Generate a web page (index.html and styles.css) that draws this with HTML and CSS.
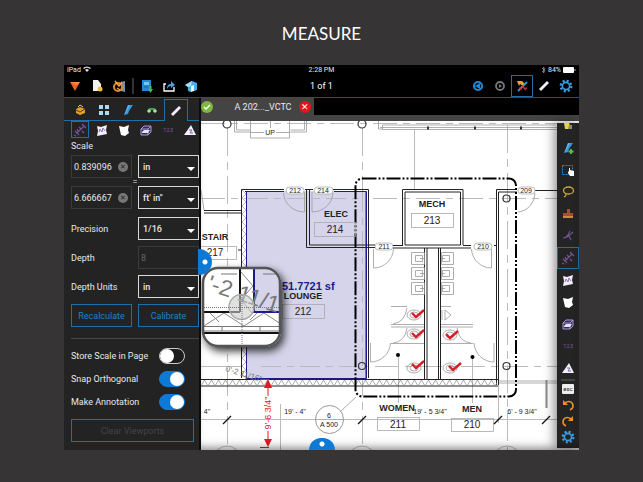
FILE: index.html
```html
<!DOCTYPE html>
<html lang="en">
<head>
    <meta charset="UTF-8">
    <meta name="viewport" content="width=device-width, initial-scale=1.0">
    <title>Measure</title>
    <link rel="stylesheet" href="styles.css">
</head>
<body>
    <!-- shared icons -->
    <svg class="sprite" aria-hidden="true">
        <symbol id="i-length" viewBox="0 0 14 14"><path d="M2 8l4 4M9 1l4 4M4 10l7-7M1 12l2 1M4 6l1 2M6 4l2 2M9 8l2 2" fill="none" stroke="#79549f" stroke-width="1.2"/></symbol>
        <symbol id="i-area" viewBox="0 0 14 14"><path d="M2 3l4 1 6-2-1 5 1 4-5 1-5 1 1-5z" fill="#f3effa"/><path d="M4 9l1-3 2 3 1-4 2 3" fill="none" stroke="#8c6fc0"/></symbol>
        <symbol id="i-perimeter" viewBox="0 0 14 14"><path d="M2 3l5 1 5-2-1 5 1 3-4 3-4-1z" fill="#fff"/></symbol>
        <symbol id="i-volume" viewBox="0 0 14 14"><path d="M2 6l3-3h7v6l-3 3H2z" fill="#352a58" stroke="#a99bd6"/><path d="M2 6h7v6M9 6l3-3" fill="none" stroke="#a99bd6"/><path d="M3 9l2-2h6L9 10H3z" fill="#e6e2f6"/></symbol>
        <symbol id="i-count" viewBox="0 0 14 14"><text x="7" y="9" class="count-text">123</text></symbol>
        <symbol id="i-angle" viewBox="0 0 14 14"><path d="M8 2l5 10H1z" fill="#f5f2fb"/><path d="M6 7h3l-2 3h3" fill="none" stroke="#7d5fb0"/></symbol>
        <symbol id="i-gear" viewBox="0 0 14 14"><circle cx="7" cy="7" r="5.3" fill="none" stroke="#3aa0e8" stroke-width="2.2" stroke-dasharray="2.1 2.06"/><circle cx="7" cy="7" r="3.6" fill="none" stroke="#3aa0e8" stroke-width="1.6"/></symbol>
        <symbol id="i-ruler" viewBox="0 0 14 14"><path d="M3 11l8-8" stroke="#f4ecfa" stroke-width="2.8"/></symbol>
        <symbol id="i-pen" viewBox="0 0 14 14"><path d="M7 2l5 0-4 6-1 3-4 1 2-3z" fill="#2f97e0"/><path d="M7 2l2 0-4 8-2 2z" fill="#5fb2f0"/></symbol>
        <symbol id="check" viewBox="0 0 14 10"><path d="M1 4l4 4 8-7" fill="none" stroke="#d81e28" stroke-width="2.4"/></symbol>
    </svg>

    <h1 class="page-title">MEASURE</h1>

    <div class="app">
        <div class="status-bar">
            <div class="status-left">iPad
                <svg width="8" height="6" viewBox="0 0 8 6"><path d="M0 2a6 6 0 0 1 8 0L7 3a4.500 4.500 0 0 0-6 0zM2 4a3 3 0 0 1 4 0L4 6z" fill="#ddd"/></svg>
            </div>
            <div class="status-time">2:28 PM</div>
            <div class="status-right">
                <svg width="5" height="8" viewBox="0 0 5 8"><path d="M1 2l3 3-1.500 2V1L4 3 1 6" fill="none" stroke="#999" stroke-width=".7"/></svg>
                84%
                <svg width="13" height="6" viewBox="0 0 13 6"><rect width="11" height="6" rx="1" fill="#fff"/><path d="M12 2v2" stroke="#aaa"/></svg>
            </div>
        </div>

        <div class="toolbar">
            <div class="tools">
                <button class="tool" aria-label="Menu"><svg viewBox="0 0 14 14"><path d="M2 3h10L7 12z" fill="#e8622c"/><path d="M2 3h10L9 6z" fill="#f7894f"/></svg></button>
                <button class="tool" aria-label="New"><svg viewBox="0 0 14 14"><path d="M3 1h5l3 4v7H3z" fill="#f2f2f2"/><circle cx="10" cy="10" r="2.500" fill="#f0c13d"/></svg></button>
                <button class="tool" aria-label="Profile"><svg viewBox="0 0 14 14"><path d="M9 3l4-1v11l-4-1z" fill="#6f93b5"/><circle cx="6" cy="8" r="4" fill="none" stroke="#e08a2a" stroke-width="2"/><path d="M3 2l4 5 3-4M5 9l3 2" fill="none" stroke="#f0a64b" stroke-width="1.500"/></svg></button>
                <span class="separator"></span>
                <button class="tool" aria-label="Save"><svg viewBox="0 0 14 14"><path d="M2 1h9v11H2z" fill="#2389d6"/><path d="M4 3h5v3H4z" fill="#7cc0f2"/><path d="M4 8h4" stroke="#1665a8"/><path d="M8 10h5l-2.500 4z" fill="#54b948"/><path d="M10.500 7v4" stroke="#54b948" stroke-width="2"/></svg></button>
                <button class="tool" aria-label="Share"><svg viewBox="0 0 14 14"><path d="M4 5H2v7h10V8" fill="none" stroke="#fff" stroke-width="1.300"/><path d="M5 10c0-4 2-5 4-5V2l4 4-4 3V7c-2 0-3 1-4 3z" fill="#3ba4ec"/></svg></button>
                <button class="tool" aria-label="Studio"><svg viewBox="0 0 14 14"><path d="M1 6l7-4 5 2v7l-3 1V8L7 7v6L4 12V8z" fill="#49aee8"/><path d="M1 6l7-4-1 5-3 1z" fill="#a5ddfa"/><path d="M7 7v6l3-1V6z" fill="#e6f6ff"/></svg></button>
            </div>
            <div class="page-count">1 of 1</div>
            <div class="tools tools-right">
                <button class="tool" aria-label="Previous"><svg viewBox="0 0 14 14"><circle cx="7" cy="7" r="4" fill="none" stroke="#1e88d8" stroke-width="2.200"/><path d="M9 4v6L4 7z" fill="#1e88d8"/></svg></button>
                <button class="tool" aria-label="Next"><svg viewBox="0 0 14 14"><circle cx="7" cy="7" r="4" fill="none" stroke="#777" stroke-width="1.800"/><path d="M6 5v4l3-2z" fill="#777"/></svg></button>
                <button class="tool selected" aria-label="Toolsets"><svg viewBox="0 0 14 14"><path d="M2 2h5l3 3-2 2-3-2-1 2z" fill="#f2a23a"/><path d="M3 12l9-9" stroke="#3994dc" stroke-width="2"/><path d="M7 7l4 4M5 8l1 3M9 10l3-1" stroke="#c42f2f" stroke-width="1.600"/></svg></button>
                <button class="tool" aria-label="Measure"><svg><use href="#i-ruler"/></svg></button>
                <button class="tool" aria-label="Settings"><svg><use href="#i-gear"/></svg></button>
            </div>
        </div>

        <div class="workspace">
            <div class="sidebar">
                <div class="panel-tabs">
                    <button class="tab" aria-label="Tool Chest"><svg viewBox="0 0 14 14"><path d="M3 6l4-2 5 2v4l-5 2-4-2z" fill="#e0a02f"/><path d="M3 7l4 2 5-3" fill="none" stroke="#5b3b0d"/><path d="M5 4l2-2 3 2" fill="none" stroke="#f3c86a"/></svg></button>
                    <button class="tab" aria-label="Thumbnails"><svg viewBox="0 0 14 14"><path d="M2 2h4v4H2zM8 2h4v4H8zM2 8h4v4H2zM8 8h4v4H8z" fill="#a9dcfb"/></svg></button>
                    <button class="tab" aria-label="Markups"><svg><use href="#i-pen"/></svg></button>
                    <button class="tab" aria-label="Search"><svg viewBox="0 0 14 14"><path d="M3 6h3v3H3zM8 6h3v3H8z" fill="#d4f0d0"/><path d="M4 5h6v2H4z" fill="#4f9a56"/><circle cx="4" cy="8" r="1.500" fill="none" stroke="#6db06f"/><circle cx="10" cy="8" r="1.500" fill="none" stroke="#6db06f"/></svg></button>
                    <button class="tab active" aria-label="Measurements"><svg><use href="#i-ruler"/></svg></button>
                </div>
                <div class="measure-tools">
                    <button class="measure selected" aria-label="Length"><svg><use href="#i-length"/></svg></button>
                    <button class="measure" aria-label="Area"><svg><use href="#i-area"/></svg></button>
                    <button class="measure" aria-label="Perimeter"><svg><use href="#i-perimeter"/></svg></button>
                    <button class="measure" aria-label="Volume"><svg><use href="#i-volume"/></svg></button>
                    <button class="measure" aria-label="Count"><svg><use href="#i-count"/></svg></button>
                    <button class="measure" aria-label="Angle"><svg><use href="#i-angle"/></svg></button>
                </div>

                <label class="scale-label" for="scaleFrom">Scale</label>
                <div class="form-grid scale-grid">
                    <div class="text-field">
                        <input type="text" id="scaleFrom" value="0.839096">
                        <button class="clear" aria-label="Clear">✕</button>
                    </div>
                    <div class="select-field">
                        <select aria-label="Page units"><option>in</option></select>
                    </div>
                    <span class="equals">=</span>
                    <div class="text-field">
                        <input type="text" aria-label="Scale to" value="6.666667">
                        <button class="clear" aria-label="Clear">✕</button>
                    </div>
                    <div class="select-field">
                        <select aria-label="Scale units"><option>ft' in"</option></select>
                    </div>
                </div>

                <div class="form-grid">
                    <label for="precision">Precision</label>
                    <div class="select-field">
                        <select id="precision"><option>1/16</option></select>
                    </div>
                    <label for="depth">Depth</label>
                    <div class="text-field">
                        <input type="text" id="depth" value="8" disabled>
                    </div>
                    <label for="depthUnits">Depth Units</label>
                    <div class="select-field">
                        <select id="depthUnits"><option>in</option></select>
                    </div>
                    <button class="btn">Recalculate</button>
                    <button class="btn">Calibrate</button>
                </div>

                <div class="options">
                    <label class="option">Store Scale in Page <input type="checkbox" class="switch"></label>
                    <label class="option">Snap Orthogonal <input type="checkbox" class="switch" checked></label>
                    <label class="option">Make Annotation <input type="checkbox" class="switch" checked></label>
                    <button class="btn" disabled>Clear Viewports</button>
                </div>
            </div>

            <div class="document">
                <div class="doc-tabs">
                    <div class="doc-tab">
                        <svg width="12" height="12" viewBox="0 0 12 12"><circle cx="6" cy="6" r="6" fill="#7cb83c"/><path d="M3 6l2 2 4-4" fill="none" stroke="#fff" stroke-width="1.500"/></svg>
                        <span>A 202..._VCTC</span>
                        <button class="close-tab" aria-label="Close">✕</button>
                    </div>
                </div>

                <div class="canvas">
                    <svg class="plan" viewBox="201 121 378 329" preserveAspectRatio="xMinYMin slice">
                        <defs>
                            <pattern id="hatch" width="7" height="7" patternUnits="userSpaceOnUse" x="201" y="379"><path d="M0 7l3.500-6 3.500 6" fill="none" stroke="#888" stroke-width=".7"/></pattern>
                            <pattern id="wallHatch" width="4" height="8" patternUnits="userSpaceOnUse" x="242" y="190"><path d="M0 0l4 4-4 4" fill="none" stroke="#888" stroke-width=".6"/></pattern>
                            <clipPath id="lensClip"><rect x="202" y="267" width="79" height="80" rx="16"/></clipPath>
                            <filter id="lensShadow" x="-30%" y="-30%" width="160%" height="160%"><feDropShadow dx="3" dy="4" stdDeviation="4" flood-opacity=".8"/></filter>
                        </defs>

                        <!-- grid lines -->
                        <g class="grid">
                            <path d="M201 123.500H557M201 198.500H557M246 366.500H557" stroke-dasharray="24 6 7 6"/>
                            <path d="M227.500 128V450M362.500 128V450M507.500 125V450" stroke-dasharray="28 6 8 6"/>
                            <path d="M414.500 129V189M201 366.500h40M280.500 404v46M398.500 357v46M472.500 357v46M498.500 385v38M201 419.500H557"/>
                            <circle cx="227" cy="460" r="14"/><circle cx="362" cy="460" r="14"/><circle cx="507" cy="460" r="14"/>
                        </g>

                        <!-- stairs and top wall -->
                        <path class="thin" d="M234.500 121v11h16M306.500 121v11h-16M236.500 121v9h14M304.500 121v9h-14M250.500 121v17h39v-17M250 132.500h14M276 132.500h14M270.500 121v7M378.500 121v8h4v-4h174M380 127.500h177M382 129.500h175"/>
                        <path d="M427 128h2M474 128h2M520 128h2" stroke="#333" stroke-width="3"/>
                        <text class="small" x="270" y="135">UP</text>

                        <rect x="246" y="191" width="121" height="187" fill="#d5d4ea"/>
                        <path d="M248 198.500h118M362.500 192v174" class="grid" stroke-dasharray="20 6 7 6"/>
                        <path d="M261 366.500h96" class="grid" stroke-dasharray="20 6 7 6"/>

                        <!-- walls -->
                        <path class="wall" d="M204 210.500h37M204 213h37M241.500 378V189.500H284M245 191.500h39M305 189.500h8M333 189.500h35.500V378M306.500 190v57.500H375M309.500 190v55H375M366 192v186M238 250h4"/>
                        <rect x="242" y="190" width="4" height="189" fill="url(#wallHatch)"/>
                        <path d="M283 191.500H246.500V378.500H366.500V191.500H334" class="navy"/>
                        <path class="wall" d="M402.500 245V189.500h60.500V245M405 245v-53h55.500v53zM393 245.500h10M463 245.500h8M393 248h78M494 245.500h3M496.500 385V189.500H517M498.500 385V192H517M535 190.500h22M424.500 248V379M427 248V379M438.500 248V379M440.500 248V379"/>
                        <path class="wall" d="M201 379.500H498M201 386H498"/>
                        <path class="thin" d="M499 381h58M499 383h58"/>
                        <rect x="201" y="380" width="296" height="6" fill="url(#hatch)"/>
                        <path d="M546.500 380v28" stroke="#888" stroke-width="2"/>

                        <!-- doors -->
                        <g class="thin">
                            <path d="M283.500 193a21 20 0 0 0 21 19v-20M333 193a21 20 0 0 1-21 19v-20M373.500 249v19a20 20 0 0 0 20-19M491.500 249v19a20 20 0 0 1-20-19M535 193a19 19 0 0 1-17 19M370.500 343v19a20 20 0 0 0 20-19M494 343v19a20 20 0 0 1-20-19M201 190l3 20"/>
                            <path d="M391 306.500h16M391 324.500h33M391 343.500h33M441 306.500h10M441 324.500h32M441 343.500h32M391 327h33M441 327h32M407 308q-2 14-14 16M407 328q-2 14-14 15M457 328q2 14 14 15"/>
                        </g>

                        <!-- fixtures -->
                        <g class="thin">
                            <path d="M411.500 252.500h13v12h-13zM411.500 267.500h13v12h-13zM411.500 282.500h13v12h-13zM441.500 252.500h12v12h-12zM441.500 267.500h12v12h-12zM441.500 282.500h12v12h-12z"/>
                            <path d="M415.500 255.500h7v6h-7zM415.500 270.500h7v6h-7zM415.500 285.500h7v6h-7zM442.500 255.500h7v6h-7zM442.500 270.500h7v6h-7zM442.500 285.500h7v6h-7zM420 258.500h4M420 273.500h4M420 288.500h4M441 258.500h4M441 273.500h4M441 288.500h4M442 310v10M445 310l6 5-6 5z"/>
                            <ellipse cx="414" cy="315" rx="7" ry="5"/><ellipse cx="414" cy="334" rx="7" ry="5"/><ellipse cx="414" cy="368" rx="7" ry="5"/>
                            <ellipse cx="450" cy="335" rx="7" ry="5"/><ellipse cx="450" cy="368" rx="7" ry="5"/>
                            <ellipse cx="414" cy="315" rx="4" ry="3"/><ellipse cx="414" cy="334" rx="4" ry="3"/><ellipse cx="414" cy="368" rx="4" ry="3"/>
                            <ellipse cx="450" cy="335" rx="4" ry="3"/><ellipse cx="450" cy="368" rx="4" ry="3"/>
                        </g>
                        <circle cx="398" cy="355" r="2"/><circle cx="472.500" cy="357" r="2"/>
                        <use href="#check" x="411" y="309" width="14" height="10"/>
                        <use href="#check" x="411" y="329" width="14" height="10"/>
                        <use href="#check" x="411" y="360" width="14" height="10"/>
                        <use href="#check" x="445" y="330" width="14" height="10"/>
                        <use href="#check" x="448" y="362" width="14" height="10"/>

                        <g class="column">
                            <circle cx="227" cy="124" r="4"/><circle cx="362" cy="124" r="4"/><circle cx="506.500" cy="198.500" r="3.500"/><circle cx="362" cy="366" r="3.500"/><circle cx="506.500" cy="366" r="3.500"/>
                        </g>

                        <rect class="boundary" x="355.500" y="178.500" width="160.500" height="218" rx="7"/>

                        <!-- door numbers -->
                        <g class="pill">
                            <rect x="286" y="187" width="18" height="7" rx="3.500"/><rect x="314" y="187" width="19" height="7" rx="3.500"/><rect x="375" y="243" width="18" height="7" rx="3.500"/><rect x="474" y="243" width="18" height="7" rx="3.500"/><rect x="518" y="187" width="17" height="7" rx="3.500"/>
                        </g>
                        <g class="small">
                            <text x="295" y="193">212</text><text x="323" y="193">214</text><text x="384" y="249">211</text><text x="483" y="249">210</text><text x="526" y="193">209</text>
                        </g>

                        <!-- rooms -->
                        <g class="room-box">
                            <path d="M201 246.500h35.500v13H201"/><rect x="314.500" y="222.500" width="41" height="14"/><rect x="282.500" y="304.500" width="42" height="14"/><rect x="411.500" y="213.500" width="42" height="14"/><rect x="377.500" y="417.500" width="42" height="13"/><rect x="451.500" y="418.500" width="42" height="13"/>
                        </g>
                        <g class="room">
                            <text x="336" y="217">ELEC</text><text x="215" y="240">STAIR</text><text x="303" y="299">LOUNGE</text><text x="432" y="207">MECH</text><text x="397" y="411">WOMEN</text><text x="472" y="412">MEN</text>
                        </g>
                        <g class="label">
                            <text x="335" y="233">214</text><text x="215" y="256">217</text><text x="303" y="315">212</text><text x="432" y="224">213</text><text x="398" y="428">211</text><text x="472" y="428">210</text>
                        </g>
                        <text class="area-value" x="282" y="290">51.7721 sf</text>

                        <!-- dimensions -->
                        <path d="M223 424l8-8M358 424l8-8M494 424l8-8M542 424l8-8" stroke="#111" stroke-width="1.300"/>
                        <path class="thin" d="M341 411l15-14"/>
                        <circle cx="329.500" cy="419.500" r="14" fill="#fff" stroke="#999"/>
                        <path class="thin" d="M315 419.500h29"/>
                        <g class="small">
                            <text x="207" y="414">4"</text><text x="295" y="414">19' - 4"</text><text x="430" y="414">19' - 5 3/4"</text><text x="522" y="414">6' - 9 3/4"</text><text x="329" y="418">6</text><text x="329" y="427">A 500</text>
                        </g>
                        <text class="gray-dim" transform="translate(225 371) rotate(17)">0'-2 11/16"</text>
                        <path d="M260 379.500h9M260 447.500h9M268 382v14M268 431v14" stroke="#e01b22"/>
                        <path d="M268 379l4 9h-8zM268 447l4-8h-8z" fill="#e01b22"/>
                        <text class="red-dim" transform="translate(271 413) rotate(-90)">9'-6 3/4"</text>

                        <!-- magnifier -->
                        <rect x="202" y="267" width="79" height="80" rx="16" fill="#fff" filter="url(#lensShadow)"/>
                        <g clip-path="url(#lensClip)">
                            <path d="M254 267h30v45h-30z" fill="#d5d4ea"/>
                            <path d="M241 272l12 14-12 14 12 14M204 326l20-13 20 13 20-13 20 13M210 313l9 9M250 320l8-8" fill="none" stroke="#888"/>
                            <path d="M221 274h16M263 274h14M202 326.500h80M202 331h80M222 327v4M260 327v4" stroke="#777"/>
                            <path d="M240 267v45M202 312h38M202 333h80" stroke="#111" stroke-width="2"/>
                            <path d="M254 267v45h28" fill="none" stroke="#1b1b8c" stroke-width="2"/>
                            <text class="lens-text" transform="translate(206 290) rotate(18)">'-2 11/1</text>
                            <circle cx="241.500" cy="307" r="12.500" fill="#ccc" fill-opacity=".6" stroke="#aaa" stroke-width="1.500"/>
                            <path d="M204 307.500h76M242 295v50" stroke="#777" stroke-dasharray="1 1"/>
                        </g>
                        <rect x="203" y="268" width="77" height="78" rx="15" fill="none" stroke="#555" stroke-width="2.500"/>
                    </svg>
                    <button class="panel-handle" aria-label="Toggle panel"></button>

                    <div class="rail">
                        <button class="tool" aria-label="Highlight"><svg viewBox="0 0 14 14"><path d="M3 4h5l2 4-3 2H4z" fill="#e6d23c"/><path d="M8 6h3v4H7z" fill="#8b8b7a"/></svg></button>
                        <button class="tool" aria-label="Add markup"><svg viewBox="0 0 14 14"><use href="#i-pen" width="14" height="14"/><path d="M10 8v5M7.500 10.500h5" stroke="#5bc04b" stroke-width="1.800"/></svg></button>
                        <button class="tool" aria-label="Select"><svg viewBox="0 0 14 14"><path d="M1.500 2.500h10v9h-10z" fill="none" stroke="#2389d6" stroke-dasharray="2 1"/><path d="M8 5v4l-1-1v2l2 3h4V8L9 7V5z" fill="#fff"/></svg></button>
                        <button class="tool" aria-label="Lasso"><svg viewBox="0 0 14 14"><ellipse cx="7.500" cy="5.500" rx="5" ry="3.500" fill="none" stroke="#d0a640" stroke-width="1.300"/><path d="M4 8c2 1 1 3-1 4" fill="none" stroke="#d0a640" stroke-width="1.300"/></svg></button>
                        <button class="tool" aria-label="Stamp"><svg viewBox="0 0 14 14"><path d="M6 2h3v4h3v3H2V6h4z" fill="#a04f34"/><path d="M2 9h10v2H2z" fill="#c98a4a"/></svg></button>
                        <button class="tool" aria-label="Calibrate"><svg viewBox="0 0 14 14"><path d="M2 9c3 0 6-2 10-6M7 5l3 6M9 2L7 6l-2 2" fill="none" stroke="#6d5390" stroke-width="1.200"/></svg></button>
                        <button class="tool selected" aria-label="Length"><svg><use href="#i-length"/></svg></button>
                        <button class="tool" aria-label="Area"><svg><use href="#i-area"/></svg></button>
                        <button class="tool" aria-label="Perimeter"><svg><use href="#i-perimeter"/></svg></button>
                        <button class="tool" aria-label="Volume"><svg><use href="#i-volume"/></svg></button>
                        <button class="tool" aria-label="Count"><svg><use href="#i-count"/></svg></button>
                        <button class="tool" aria-label="Angle"><svg><use href="#i-angle"/></svg></button>
                        <span class="rail-divider"></span>
                        <button class="tool short"><span class="esc">esc</span></button>
                        <button class="tool short" aria-label="Undo"><svg viewBox="0 0 14 14"><path d="M4 5c4-3 8-1 8 3 0 2-1 3-3 4" fill="none" stroke="#e8922c" stroke-width="1.600"/><path d="M2 2v5h5z" fill="#e8922c"/></svg></button>
                        <button class="tool short" aria-label="Redo"><svg viewBox="0 0 14 14"><path d="M10 5C6 2 2 4 2 8c0 2 1 3 3 4" fill="none" stroke="#e8922c" stroke-width="1.600"/><path d="M12 2v5H7z" fill="#e8922c"/></svg></button>
                        <button class="tool short" aria-label="Settings"><svg><use href="#i-gear"/></svg></button>
                    </div>
                </div>
            </div>
        </div>
        <button class="bottom-handle" aria-label="Toggle bottom panel"></button>
    </div>
</body>
</html>
```
FILE: styles.css
```css
* {
    margin: 0;
    padding: 0;
    box-sizing: border-box;
}

body {
    background: #363435;
    color: #e8e8e8;
    font-family: Roboto, "Liberation Sans", sans-serif;
    font-size: 9px;
    padding: 0 64px 32px;
}

button,
input,
select {
    font: inherit;
    color: inherit;
    background: none;
    border: none;
    border-radius: 0;
}

button {
    cursor: pointer;
}

.sprite {
    display: none;
}

.page-title {
    font-family: Lato, sans-serif;
    font-size: 17px;
    font-weight: normal;
    line-height: 23px;
    text-align: center;
    color: #fff;
    padding: 22px 0 20px;
}

.app {
    position: relative;
    background: #000;
    overflow: hidden;
}

/* top bars */
.status-bar,
.toolbar {
    display: grid;
    grid-template-columns: 1fr auto 1fr;
    align-items: center;
}

.status-bar {
    height: 10px;
    padding: 0 3px;
    font-size: 7px;
    line-height: 10px;
}

.status-right {
    display: flex;
    justify-content: flex-end;
    align-items: center;
    gap: 2px;
}

.toolbar {
    height: 23px;
    border-bottom: 1px solid #14568a;
}

.page-count {
    color: #fff;
}

.tools {
    display: flex;
    align-items: center;
}

.tools-right {
    justify-content: flex-end;
    padding-right: 2px;
}

.separator {
    width: 2px;
    height: 16px;
    margin: 0 2px;
    background: #333;
}

.tool {
    display: flex;
    justify-content: center;
    align-items: center;
    flex: none;
    width: 22px;
    height: 22px;
}

.tool svg,
.tab svg,
.measure svg {
    display: block;
    width: 14px;
    height: 14px;
}

.selected {
    border: 1px solid #1f6fa9;
}

.count-text {
    font-size: 6px;
    text-anchor: middle;
    fill: #79549f;
}

.workspace {
    display: flex;
}

/* left panel */
.sidebar {
    flex: none;
    width: 137px;
    padding: 0 2px 8px 7px;
    background: #232323;
    border-right: 2px solid #0c0c0c;
}

.panel-tabs {
    display: flex;
    height: 23px;
    padding: 1px 0 0 4px;
    margin: 0 -2px 0 -7px;
    border-bottom: 1px solid #1f6fa9;
}

.tab {
    display: flex;
    justify-content: center;
    align-items: center;
    width: 24px;
    height: 22px;
}

.tab.active {
    background: #232323;
    border: 1px solid #1f6fa9;
    border-bottom: none;
}

.measure-tools {
    display: flex;
    height: 16px;
    margin: 0 -4px 0 -2px;
}

.measure {
    display: flex;
    justify-content: center;
    align-items: center;
    width: 22px;
    height: 17px;
}

.measure.selected {
    width: 18px;
    margin: 0 2px;
}

.scale-label {
    display: block;
    line-height: 18px;
}

.form-grid {
    display: grid;
    grid-template-columns: 1fr 1fr;
    grid-auto-rows: 23px;
    gap: 6px;
    align-items: center;
    margin-right: -2px;
}

.scale-grid {
    position: relative;
    row-gap: 8px;
    margin-bottom: 8px;
}

.equals {
    position: absolute;
    left: 0;
    right: 0;
    top: 22px;
    line-height: 10px;
    text-align: center;
}

.text-field,
.select-field {
    display: flex;
    align-items: center;
    position: relative;
    height: 23px;
    border: 1px solid #3a3a3a;
}

.select-field {
    border-color: #d8d8d8;
}

.text-field input,
.select-field select {
    width: 100%;
    min-width: 0;
    height: 100%;
    padding-left: 2px;
}

.text-field input:disabled {
    color: #666;
}

.select-field select {
    appearance: none;
    padding-left: 4px;
    font-weight: 500;
}

.select-field::after {
    content: "";
    position: absolute;
    right: 3px;
    top: 11px;
    border: 4px solid transparent;
    border-top-color: #fff;
    border-bottom: none;
    pointer-events: none;
}

.clear {
    flex: none;
    width: 10px;
    height: 10px;
    margin-right: 3px;
    border-radius: 50%;
    background: #777;
    color: #232323;
    font-size: 7px;
    line-height: 10px;
}

.btn {
    height: 23px;
    border: 1px solid #1f6fa9;
    color: #2480c4;
}

.btn:disabled {
    color: #444;
}

.options {
    display: flex;
    flex-direction: column;
    border-top: 1px solid #484848;
    margin: 11px -2px 0 0;
    padding-top: 5px;
}

.option {
    display: flex;
    justify-content: space-between;
    align-items: center;
    height: 23px;
    padding-right: 14px;
}

.options .btn {
    margin: 6px 5px 0 0;
}

.switch {
    appearance: none;
    display: flex;
    width: 26px;
    height: 16px;
    border: 1px solid #ccc;
    border-radius: 8px;
    background: #1c1c1c;
}

.switch::before {
    content: "";
    width: 14px;
    height: 14px;
    border-radius: 50%;
    background: #fff;
}

.switch:checked {
    justify-content: flex-end;
    background: #0f7ad6;
    border-color: #0f7ad6;
}

/* document area */
.document {
    flex: 1;
    min-width: 0;
}

.doc-tabs {
    height: 23px;
    border-bottom: 6px solid #444;
}

.doc-tab {
    display: flex;
    justify-content: space-between;
    align-items: center;
    width: 113px;
    height: 17px;
    padding-right: 3px;
    background: #444;
}

.close-tab {
    width: 12px;
    height: 12px;
    border-radius: 50%;
    background: #e0161c;
    color: #fff;
    line-height: 12px;
}

.doc-tab span {
    margin-left: 14px;
}

.canvas {
    position: relative;
    background: #fff;
}

.canvas::after {
    content: "";
    position: absolute;
    inset: 0;
    box-shadow: inset 0 -8px 10px -6px rgba(0, 0, 0, 0.5);
    pointer-events: none;
}

.plan {
    display: block;
    width: 100%;
    height: 329px;
    font-family: "Liberation Sans", Arial, sans-serif;
}

.grid {
    fill: none;
    stroke: #bbb;
}

.thin {
    fill: none;
    stroke: #999;
    stroke-width: 0.8;
}

.wall {
    fill: none;
    stroke: #222;
}

.navy {
    fill: none;
    stroke: #1b1b8c;
}

.column {
    fill: none;
    stroke: #333;
    stroke-width: 1.2;
}

.boundary {
    fill: none;
    stroke: #000;
    stroke-width: 2;
    stroke-dasharray: 14 2 2 2 2 2;
}

.pill,
.room-box {
    fill: none;
    stroke: #aaa;
    stroke-width: 0.8;
}

.pill {
    fill: #fff;
}

.label,
.room,
.small {
    fill: #222;
    font-size: 10px;
    text-anchor: middle;
}

.room {
    font-size: 9px;
    font-weight: bold;
}

.small {
    font-size: 7px;
}

.area-value {
    fill: #1b1b8c;
    font-size: 11px;
    font-weight: bold;
}

.gray-dim {
    fill: #777;
    font-size: 8px;
}

.red-dim {
    fill: #e01b22;
    font-size: 9px;
    text-anchor: middle;
}

.lens-text {
    fill: #777;
    font-size: 23px;
}

.panel-handle,
.bottom-handle {
    position: absolute;
    background: radial-gradient(circle, #fff 2px, #0f7ad6 3px);
}

.panel-handle {
    left: -3px;
    top: 128px;
    width: 14px;
    height: 26px;
    border-radius: 0 13px 13px 0;
}

.bottom-handle {
    left: 50%;
    bottom: 0;
    width: 26px;
    height: 12px;
    margin-left: -13px;
    border-radius: 13px 13px 0 0;
}

/* right tool rail */
.rail {
    position: absolute;
    top: 2px;
    right: 0;
    bottom: 2px;
    width: 22px;
    background: #242424;
    box-shadow: -2px 0 12px rgba(0, 0, 0, 0.5);
    overflow: hidden;
}

.rail .tool:first-child {
    margin-top: -8px;
}

.rail .tool.short {
    height: 16px;
}

.rail-divider {
    display: block;
    height: 2px;
    margin: 0 4px;
    background: #444;
}

.esc {
    width: 12px;
    padding: 1px 0;
    border-radius: 1px;
    background: #eee;
    color: #222;
    font-size: 6px;
    line-height: 8px;
}
```
